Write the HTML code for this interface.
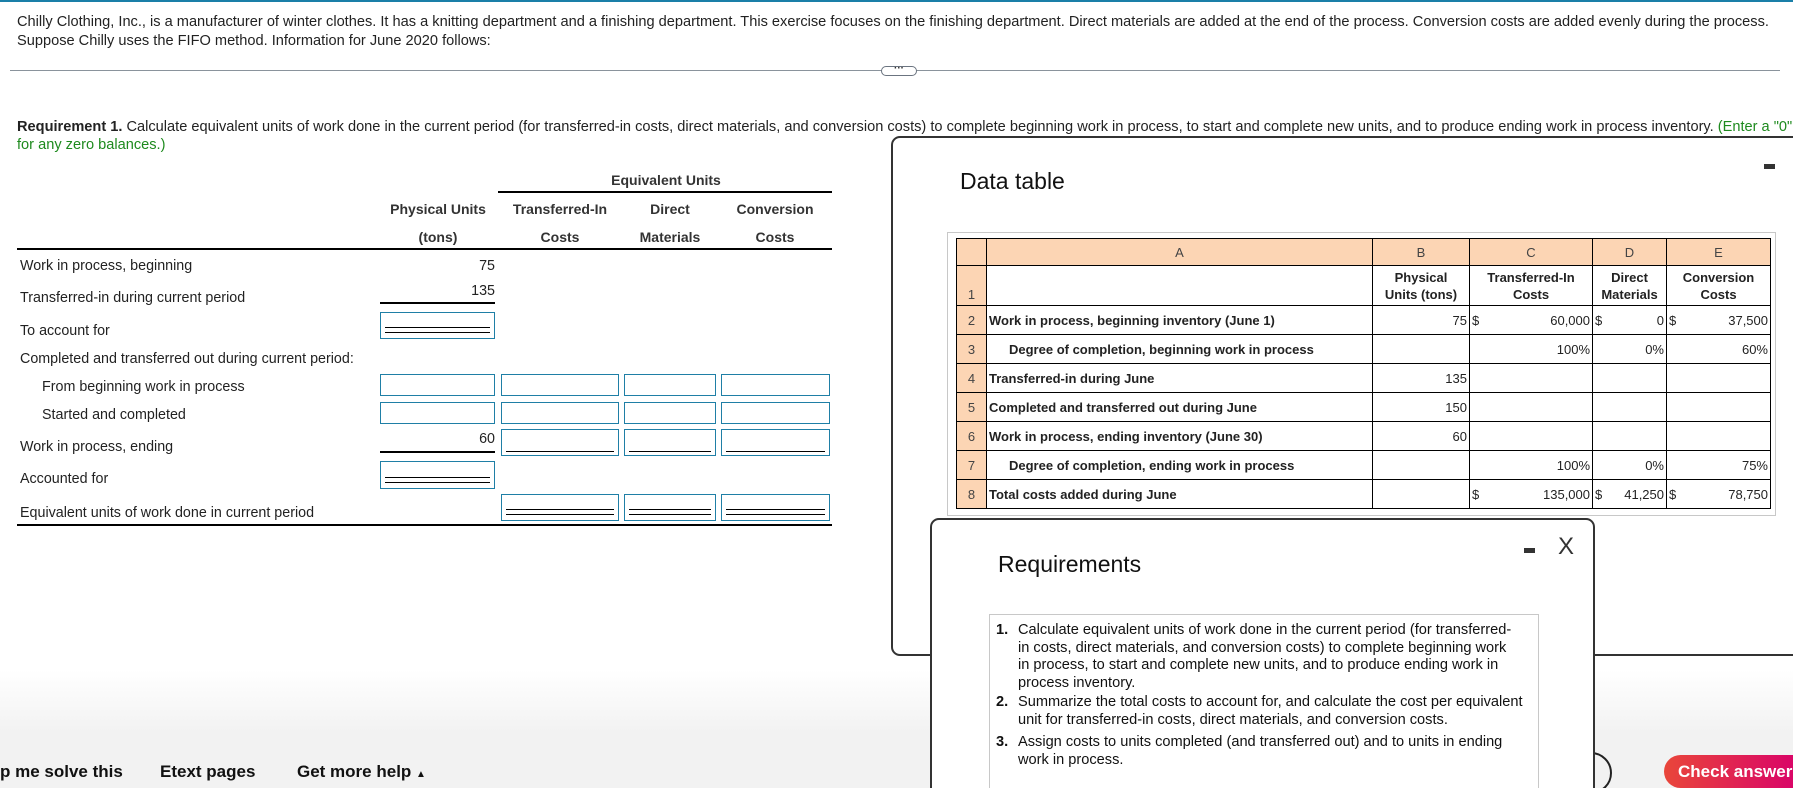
<!DOCTYPE html>
<html style="width:1793px;height:788px;overflow:hidden"><head><meta charset="utf-8"><style>
*{margin:0;padding:0;box-sizing:border-box}
body{width:1793px;height:788px;overflow:hidden;position:relative;background:#fff;font-family:"Liberation Sans",Arial,sans-serif;color:#222}
.a{position:absolute;white-space:nowrap}
.t{font-size:14.3px;line-height:16px}
.tt{font-size:14.6px;line-height:17px}
.in{position:absolute;border:1.5px solid #1f7fa6;background:#fff}
.dbl::after{content:"";position:absolute;left:4px;right:4px;bottom:5px;height:4px;border-top:1.5px solid #000;border-bottom:1.5px solid #000}
.sgl::after{content:"";position:absolute;left:4px;right:4px;bottom:3px;border-top:1.5px solid #000}
.h{font-size:14px;font-weight:bold;color:#333;text-align:center;transform:translateX(-50%)}
table.d{position:absolute;left:956px;top:238px;border-collapse:collapse;font-size:13px;color:#222}
table.d td{border:1.5px solid #000;padding:0 2px;height:29px;vertical-align:middle}
table.d tr.hd td{background:#fcd5b4;text-align:center;color:#444;height:27px}
table.d td.n{background:#fcd5b4;text-align:center;color:#444;width:30px;padding:0}
table.d td.l{font-weight:bold}
table.d td.r{text-align:right}
table.d td.c{text-align:center;font-weight:bold;line-height:17px}
</style></head><body>
<div class="a" style="left:0;top:0;width:1793px;height:2px;background:#1a7fa8"></div>
<div class="a tt" style="left:17px;top:14px">Chilly Clothing, Inc., is a manufacturer of winter clothes. It has a knitting department and a finishing department. This exercise focuses on the finishing department. Direct materials are added at the end of the process. Conversion costs are added evenly during the process.</div>
<div class="a tt" style="left:17px;top:33px">Suppose Chilly uses the FIFO method. Information for June 2020 follows:</div>
<div class="a" style="left:10px;top:70px;width:1770px;height:1px;background:#8a939c"></div>
<div class="a" style="left:881px;top:66px;width:36px;height:10px;border:1.5px solid #6b7480;border-radius:6px;background:#fff;font-size:10px;line-height:4px;text-align:center;color:#333;font-weight:bold">···</div>
<div class="a tt" style="left:17px;top:119px"><b>Requirement 1.</b> Calculate equivalent units of work done in the current period (for transferred-in costs, direct materials, and conversion costs) to complete beginning work in process, to start and complete new units, and to produce ending work in process inventory. <span style="color:#1e8a1e">(Enter a "0"</span></div>
<div class="a tt" style="left:17px;top:137px;color:#1e8a1e">for any zero balances.)</div>

<div class="a h" style="left:666px;top:172px">Equivalent Units</div>
<div class="a" style="left:498px;top:191px;width:334px;height:1.5px;background:#000"></div>
<div class="a h" style="left:438px;top:201px">Physical Units</div>
<div class="a h" style="left:438px;top:229px">(tons)</div>
<div class="a h" style="left:560px;top:201px">Transferred-In</div>
<div class="a h" style="left:560px;top:229px">Costs</div>
<div class="a h" style="left:670px;top:201px">Direct</div>
<div class="a h" style="left:670px;top:229px">Materials</div>
<div class="a h" style="left:775px;top:201px">Conversion</div>
<div class="a h" style="left:775px;top:229px">Costs</div>
<div class="a" style="left:17px;top:248px;width:815px;height:1.5px;background:#000"></div>

<div class="a t" style="left:20px;top:258px">Work in process, beginning</div>
<div class="a t" style="left:380px;top:258px;width:115px;text-align:right">75</div>
<div class="a t" style="left:20px;top:290px">Transferred-in during current period</div>
<div class="a t" style="left:380px;top:283px;width:115px;text-align:right">135</div>
<div class="a" style="left:380px;top:302px;width:115px;height:1.5px;background:#000"></div>
<div class="a t" style="left:20px;top:323px">To account for</div>
<div class="in dbl" style="left:380px;top:312px;width:115px;height:27px"></div>
<div class="a t" style="left:20px;top:351px">Completed and transferred out during current period:</div>
<div class="a t" style="left:42px;top:379px">From beginning work in process</div>
<div class="in" style="left:380px;top:374px;width:115px;height:22px"></div>
<div class="in" style="left:501px;top:374px;width:118px;height:22px"></div>
<div class="in" style="left:624px;top:374px;width:92px;height:22px"></div>
<div class="in" style="left:721px;top:374px;width:109px;height:22px"></div>
<div class="a t" style="left:42px;top:407px">Started and completed</div>
<div class="in" style="left:380px;top:402px;width:115px;height:22px"></div>
<div class="in" style="left:501px;top:402px;width:118px;height:22px"></div>
<div class="in" style="left:624px;top:402px;width:92px;height:22px"></div>
<div class="in" style="left:721px;top:402px;width:109px;height:22px"></div>
<div class="a t" style="left:20px;top:439px">Work in process, ending</div>
<div class="a t" style="left:380px;top:431px;width:115px;text-align:right">60</div>
<div class="a" style="left:380px;top:451px;width:115px;height:1.5px;background:#000"></div>
<div class="in sgl" style="left:501px;top:429px;width:118px;height:27px"></div>
<div class="in sgl" style="left:624px;top:429px;width:92px;height:27px"></div>
<div class="in sgl" style="left:721px;top:429px;width:109px;height:27px"></div>
<div class="a t" style="left:20px;top:471px">Accounted for</div>
<div class="in dbl" style="left:380px;top:461px;width:115px;height:28px"></div>
<div class="a t" style="left:20px;top:505px">Equivalent units of work done in current period</div>
<div class="in dbl" style="left:501px;top:494px;width:118px;height:27px"></div>
<div class="in dbl" style="left:624px;top:494px;width:92px;height:27px"></div>
<div class="in dbl" style="left:721px;top:494px;width:109px;height:27px"></div>
<div class="a" style="left:17px;top:524px;width:815px;height:1.5px;background:#000"></div>

<div class="a" style="left:0;top:670px;width:1793px;height:63px;background:linear-gradient(#fff,#f2f2f2)"></div>
<div class="a" style="left:0;top:733px;width:1793px;height:55px;background:#f2f2f2"></div>
<div class="a" style="left:0;top:762px;font-size:17px;font-weight:bold;color:#111">p me solve this</div>
<div class="a" style="left:160px;top:762px;font-size:17px;font-weight:bold;color:#111">Etext pages</div>
<div class="a" style="left:297px;top:762px;font-size:17px;font-weight:bold;color:#111">Get more help <span style="font-size:10px">▲</span></div>
<div class="a" style="left:1664px;top:755px;width:140px;height:33px;border-radius:17px 0 0 17px;background:linear-gradient(90deg,#e9463a,#d8006b);color:#fff;font-weight:bold;font-size:17px;padding:7px 0 0 14px;overflow:hidden">Check answer</div>
<div class="a" style="left:1570px;top:752px;width:42px;height:42px;border:2px solid #222;border-radius:50%"></div>

<div class="a" style="left:891px;top:136px;width:950px;height:520px;border:2px solid #333;border-radius:9px;background:#fff"></div>
<div class="a" style="left:960px;top:168px;font-size:23px;color:#111">Data table</div>
<div class="a" style="left:1764px;top:164px;width:11px;height:5px;background:#333"></div>
<div class="a" style="left:947px;top:232px;width:829px;height:284px;border:1px solid #c8c8c8"></div>
<table class="d">
<colgroup><col style="width:30px"><col style="width:386px"><col style="width:97px"><col style="width:123px"><col style="width:74px"><col style="width:104px"></colgroup>
<tr class="hd"><td class="n"></td><td>A</td><td>B</td><td>C</td><td>D</td><td>E</td></tr>
<tr style="height:40px"><td class="n" style="vertical-align:bottom;padding-bottom:3px">1</td><td></td><td class="c">Physical<br>Units (tons)</td><td class="c">Transferred-In<br>Costs</td><td class="c">Direct<br>Materials</td><td class="c">Conversion<br>Costs</td></tr>
<tr><td class="n">2</td><td class="l">Work in process, beginning inventory (June 1)</td><td class="r">75</td><td class="r"><span style="float:left">$</span>60,000</td><td class="r"><span style="float:left">$</span>0</td><td class="r"><span style="float:left">$</span>37,500</td></tr>
<tr><td class="n">3</td><td class="l" style="padding-left:22px">Degree of completion, beginning work in process</td><td></td><td class="r">100%</td><td class="r">0%</td><td class="r">60%</td></tr>
<tr><td class="n">4</td><td class="l">Transferred-in during June</td><td class="r">135</td><td></td><td></td><td></td></tr>
<tr><td class="n">5</td><td class="l">Completed and transferred out during June</td><td class="r">150</td><td></td><td></td><td></td></tr>
<tr><td class="n">6</td><td class="l">Work in process, ending inventory (June 30)</td><td class="r">60</td><td></td><td></td><td></td></tr>
<tr><td class="n">7</td><td class="l" style="padding-left:22px">Degree of completion, ending work in process</td><td></td><td class="r">100%</td><td class="r">0%</td><td class="r">75%</td></tr>
<tr><td class="n">8</td><td class="l">Total costs added during June</td><td></td><td class="r"><span style="float:left">$</span>135,000</td><td class="r"><span style="float:left">$</span>41,250</td><td class="r"><span style="float:left">$</span>78,750</td></tr>
</table>

<div class="a" style="left:930px;top:518px;width:665px;height:280px;border:2px solid #333;border-radius:9px;background:#fff"></div>
<div class="a" style="left:998px;top:551px;font-size:23px;color:#111">Requirements</div>
<div class="a" style="left:1524px;top:548px;width:11px;height:5px;background:#333"></div>
<div class="a" style="left:1558px;top:533px;font-size:24px;color:#333">X</div>
<div class="a" style="left:989px;top:614px;width:550px;height:180px;border:1px solid #c8c8c8;background:#fff"></div>
<div class="a" style="left:996px;top:622px;font-size:14.6px;line-height:17.5px;color:#111;white-space:normal;width:540px">
<div style="display:flex"><b style="width:22px;flex:none">1.</b><div style="width:496px">Calculate equivalent units of work done in the current period (for transferred-in costs, direct materials, and conversion costs) to complete beginning work in process, to start and complete new units, and to produce ending work in process inventory.</div></div>
<div style="display:flex;margin-top:2px"><b style="width:22px;flex:none">2.</b><div style="width:516px">Summarize the total costs to account for, and calculate the cost per equivalent unit for transferred-in costs, direct materials, and conversion costs.</div></div>
<div style="display:flex;margin-top:5px"><b style="width:22px;flex:none">3.</b><div style="width:500px">Assign costs to units completed (and transferred out) and to units in ending work in process.</div></div>
</div>
</body></html>
